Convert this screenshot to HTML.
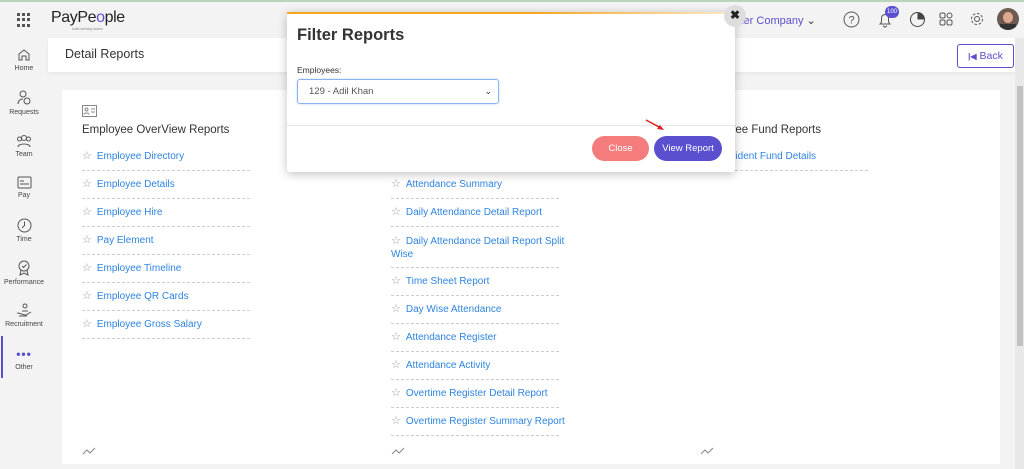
<!DOCTYPE html>
<html><head><meta charset="utf-8"><style>
*{box-sizing:border-box;margin:0;padding:0}
body{width:1024px;height:469px;overflow:hidden;background:#f3f3f3;font-family:"Liberation Sans",sans-serif;position:relative}
.abs{position:absolute}
.top{left:0;top:0;width:1024px;height:2px;background:#b9d4bb}
.side{left:0;top:38px;width:48px;height:431px;background:#f3f3f3}
.nav{position:absolute;left:0;width:48px;text-align:center;font-size:7px;color:#444}
.nav svg{display:block;margin:0 auto 3px}
.hdr{left:48px;top:38px;width:967px;height:34px;background:#fff;box-shadow:0 2px 4px rgba(0,0,0,.05)}
.card{left:62px;top:90px;width:938px;height:374px;background:#fff}
.col{position:absolute;width:168px}
.item{height:28px;border-bottom:1px dashed #ccc;font-size:10px;color:#2f84e0;line-height:27px;white-space:nowrap}
.item .s{color:#999;font-size:11px;margin-right:5px}
.item.two{height:41px;line-height:13px;padding-top:8px}
.ttl{font-size:11.5px;color:#333}
.modal{left:287px;top:12px;width:448px;height:160px;background:#fff;box-shadow:0 2px 10px rgba(0,0,0,.25);border-radius:3px}
</style></head><body>
<div class="abs top"></div>
<div class="abs" style="left:17px;top:13px;width:14px;height:14px;display:grid;grid-template-columns:repeat(3,3px);gap:2px">
<i style="background:#555;height:3px"></i><i style="background:#555;height:3px"></i><i style="background:#555;height:3px"></i><i style="background:#555;height:3px"></i><i style="background:#555;height:3px"></i><i style="background:#555;height:3px"></i><i style="background:#555;height:3px"></i><i style="background:#555;height:3px"></i><i style="background:#555;height:3px"></i></div>
<div class="abs" style="left:51px;top:9px;font-size:16px;color:#222;letter-spacing:-.4px">PayPe<span style="color:#5a4fcf">o</span>ple</div>
<div class="abs" style="left:72px;top:27px;font-size:3.5px;color:#888">build winning teams</div>
<div class="abs" style="left:735px;top:14px;font-size:11px;color:#5a4fcf">ster Company <span style="color:#333">⌄</span></div>
<svg class="abs" style="left:843px;top:11px" width="17" height="17"><circle cx="8.5" cy="8.5" r="7.5" fill="none" stroke="#555"/><text x="8.5" y="12.5" font-size="11" text-anchor="middle" fill="#555" font-family="Liberation Sans">?</text></svg>
<svg class="abs" style="left:876px;top:10px" width="18" height="18"><path d="M4 14h10l-1.5-2V8a3.5 3.5 0 0 0-7 0v4z M7.5 15.5a1.5 1.5 0 0 0 3 0" fill="none" stroke="#555"/></svg>
<div class="abs" style="left:885px;top:6px;width:14px;height:12px;border-radius:6px;background:#5a4fcf;color:#fff;font-size:6px;text-align:center;line-height:12px">100</div>
<svg class="abs" style="left:909px;top:11px" width="17" height="17"><circle cx="8.5" cy="8.5" r="7" fill="none" stroke="#444"/><path d="M8.5 1.5a7 7 0 0 1 7 7h-7z" fill="#444"/></svg>
<svg class="abs" style="left:939px;top:12px" width="14" height="14" fill="none" stroke="#555"><rect x="1" y="1" width="5" height="5" rx="1.5"/><rect x="8" y="1" width="5" height="5" rx="2.5"/><rect x="1" y="8" width="5" height="5" rx="1.5"/><rect x="8" y="8" width="5" height="5" rx="1.5"/></svg>
<svg class="abs" style="left:969px;top:11px" width="16" height="16"><circle cx="8" cy="8" r="2.5" fill="none" stroke="#555"/><circle cx="8" cy="8" r="5.5" fill="none" stroke="#555" stroke-dasharray="2.5 1.8"/></svg>
<div class="abs" style="left:997px;top:8px;width:22px;height:22px;border-radius:50%;background:#6d5a52;overflow:hidden"><div style="margin:4px auto 0;width:10px;height:11px;border-radius:50%;background:#e0a890"></div><div style="margin:1px auto;width:16px;height:8px;background:#333"></div></div>
<div class="abs side">
<div class="nav" style="top:10px"><svg width="14" height="14" fill="none" stroke="#555"><path d="M2 6l5-4 5 4v6H9V8H5v4H2z"/></svg>Home</div>
<div class="nav" style="top:52px"><svg width="14" height="16" fill="none" stroke="#555"><circle cx="6" cy="4" r="3"/><path d="M1 14c0-3 2-5 5-5"/><circle cx="10" cy="11" r="3"/></svg>Requests</div>
<div class="nav" style="top:96px"><svg width="16" height="14" fill="none" stroke="#555"><circle cx="8" cy="4" r="2.5"/><circle cx="3.5" cy="5" r="2"/><circle cx="12.5" cy="5" r="2"/><path d="M2 13c0-4 12-4 12 0"/></svg>Team</div>
<div class="nav" style="top:138px"><svg width="15" height="13" fill="none" stroke="#555"><rect x="1" y="1" width="13" height="11" rx="1"/><path d="M3 5h4M3 8h9"/></svg>Pay</div>
<div class="nav" style="top:180px"><svg width="15" height="15" fill="none" stroke="#555"><circle cx="7.5" cy="7.5" r="6.5"/><path d="M7.5 3.5v4l-2.5 2.5"/></svg>Time</div>
<div class="nav" style="top:222px"><svg width="14" height="16" fill="none" stroke="#555"><circle cx="7" cy="6" r="5"/><path d="M5 6l1.5 1.5L9.5 4.5M4 10l-1 5 4-2 4 2-1-5"/></svg>Performance</div>
<div class="nav" style="top:265px"><svg width="16" height="15" fill="none" stroke="#555"><circle cx="9" cy="3" r="2"/><path d="M6 8h6M1 10c4 0 5 2 9 2l5-3M3 13h8"/></svg>Recruitment</div>
<div class="abs" style="left:1px;top:298px;width:2px;height:42px;background:#5a4fcf"></div>
<div class="nav" style="top:312px"><div style="color:#5a4fcf;font-size:12px;line-height:8px;letter-spacing:1px;font-weight:bold">•••</div><div style="margin-top:6px">Other</div></div>
</div>
<div class="abs hdr"><div style="position:absolute;left:17px;top:9px;font-size:12.5px;color:#333">Detail Reports</div>
<div style="position:absolute;left:909px;top:6px;width:57px;height:24px;border:1px solid #5a4fcf;border-radius:3px;color:#5a4fcf;font-size:10.5px;line-height:22px;text-align:center"><b style="font-size:8px">|◀</b> Back</div></div>
<div class="abs" style="left:1015px;top:38px;width:9px;height:431px;background:#e8e8e8"></div>
<div class="abs" style="left:1017px;top:86px;width:6px;height:260px;background:#c1c1c1"></div>
<div class="abs card">
<svg style="position:absolute;left:20px;top:15px" width="15" height="12" fill="none" stroke="#888"><rect x=".5" y=".5" width="14" height="11"/><circle cx="4.5" cy="4.5" r="1.5"/><path d="M2 9.5c0-2 5-2 5 0M9 4h4M9 7h4"/></svg>
<div class="ttl" style="position:absolute;left:20px;top:34px">Employee OverView Reports</div>
<div class="ttl" style="position:absolute;left:635px;top:34px">Employee Fund Reports</div>
<div class="col" style="left:20px;top:53px">
<div class="item"><span class="s">☆</span>Employee Directory</div>
<div class="item"><span class="s">☆</span>Employee Details</div>
<div class="item"><span class="s">☆</span>Employee Hire</div>
<div class="item"><span class="s">☆</span>Pay Element</div>
<div class="item"><span class="s">☆</span>Employee Timeline</div>
<div class="item"><span class="s">☆</span>Employee QR Cards</div>
<div class="item"><span class="s">☆</span>Employee Gross Salary</div>
</div>
<div class="col" style="left:329px;top:53px">
<div class="item"><span class="s">☆</span>Attendance Detail</div>
<div class="item"><span class="s">☆</span>Attendance Summary</div>
<div class="item"><span class="s">☆</span>Daily Attendance Detail Report</div>
<div class="item two"><span class="s">☆</span>Daily Attendance Detail Report Split<br>Wise</div>
<div class="item"><span class="s">☆</span>Time Sheet Report</div>
<div class="item"><span class="s">☆</span>Day Wise Attendance</div>
<div class="item"><span class="s">☆</span>Attendance Register</div>
<div class="item"><span class="s">☆</span>Attendance Activity</div>
<div class="item"><span class="s">☆</span>Overtime Register Detail Report</div>
<div class="item"><span class="s">☆</span>Overtime Register Summary Report</div>
</div>
<div class="col" style="left:638px;top:53px">
<div class="item"><span class="s">☆</span>Provident Fund Details</div>
</div>
<svg style="position:absolute;left:20px;top:357px" width="14" height="8" fill="none" stroke="#888"><path d="M1 7l4-4 3 3 5-5"/></svg>
<svg style="position:absolute;left:329px;top:357px" width="14" height="8" fill="none" stroke="#888"><path d="M1 7l4-4 3 3 5-5"/></svg>
<svg style="position:absolute;left:638px;top:357px" width="14" height="8" fill="none" stroke="#888"><path d="M1 7l4-4 3 3 5-5"/></svg>
</div>
<div class="abs modal">
<div style="position:absolute;left:0;top:0;width:448px;height:2px;background:linear-gradient(90deg,#f5a623 0,#f5a623 55%,#fde9c8 100%)"></div>
<div style="position:absolute;left:10px;top:14px;font-size:16.5px;font-weight:bold;color:#333">Filter Reports</div>
<div style="position:absolute;left:10px;top:53px;font-size:8.5px;color:#333">Employees:</div>
<div style="position:absolute;left:10px;top:67px;width:202px;height:25px;border:1px solid #8ab4f0;border-radius:3px;box-shadow:0 0 2px #b8d3f7;font-size:9.5px;color:#555;line-height:23px;padding-left:11px">129 - Adil Khan<span style="position:absolute;right:6px;top:0;font-size:9px;color:#333">⌄</span></div>
<div style="position:absolute;left:0;top:113px;width:448px;height:1px;background:#e5e5e5"></div>
<div style="position:absolute;left:305px;top:124px;width:57px;height:25px;border-radius:13px;background:#f47c7c;color:#fff;font-size:9.5px;line-height:25px;text-align:center">Close</div>
<div style="position:absolute;left:367px;top:124px;width:68px;height:25px;border-radius:13px;background:#5a4fcf;color:#fff;font-size:9.5px;line-height:25px;text-align:center">View Report</div>
<svg style="position:absolute;left:358px;top:107px" width="22" height="14"><path d="M1 1l15 8" stroke="#e02020" stroke-width="1.5"/><path d="M19 11l-7-1 3-4z" fill="#e02020"/></svg>
</div>
<div class="abs" style="left:724px;top:5px;width:22px;height:22px;border-radius:50%;background:#ddd;font-size:12px;font-weight:bold;color:#222;text-align:center;line-height:21px">✖</div>
</body></html>
